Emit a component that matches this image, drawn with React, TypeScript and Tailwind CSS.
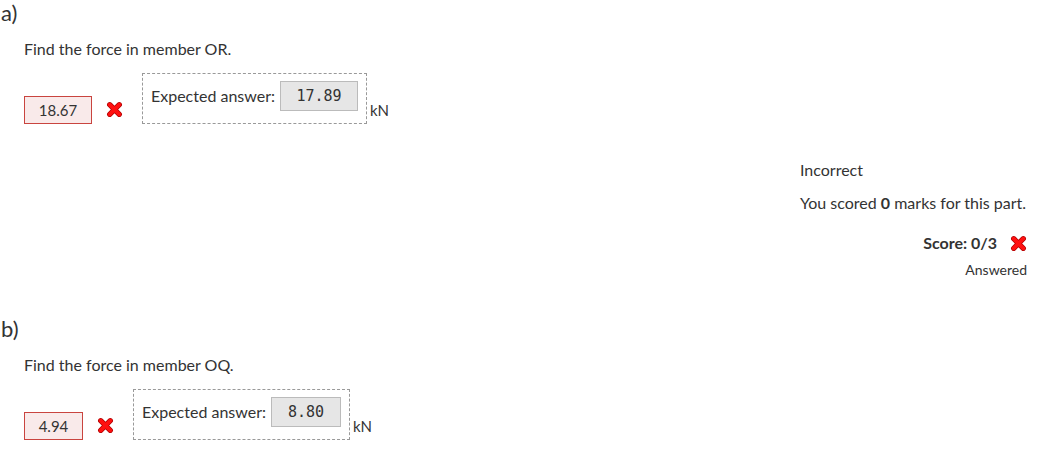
import React from "react";

const Cross = ({ className = "" }: { className?: string }) => (
  <svg viewBox="0 0 16 16" className={className} aria-hidden="true">
    <path
      d="M3.5 3.5 L12.5 12.5 M12.5 3.5 L3.5 12.5"
      stroke="#b00000"
      strokeWidth="5"
      strokeLinecap="round"
    />
    <path
      d="M3.5 3.5 L12.5 12.5 M12.5 3.5 L3.5 12.5"
      stroke="#ff1010"
      strokeWidth="3.6"
      strokeLinecap="round"
    />
  </svg>
);

function AnswerRow({
  given,
  expected,
  inputW,
  expW,
}: {
  given: string;
  expected: string;
  inputW: string;
  expW: string;
}) {
  return (
    <div className="flex items-end">
      <div
        className={`h-[28px] ${inputW} border border-[#c9443f] bg-[#f9eaea] flex items-center justify-center text-[15px] text-[#333]`}
      >
        {given}
      </div>
      <Cross className="w-[17px] h-[17px] ml-[14px] mr-[19px] mb-[6px]" />
      <div className="flex items-center border border-dashed border-[#999] pl-[8px] pr-[8px] pt-[7px] pb-[12px]">
        <span className="text-[16px] text-[#333] mr-[5px]">Expected answer:</span>
        <div
          className={`h-[30px] ${expW} bg-[#e6e6e6] border border-[#bbb] flex items-center justify-center text-[15px] text-[#333] font-['DejaVu_Sans_Mono',monospace]`}
        >
          {expected}
        </div>
      </div>
      <span className="ml-[3px] mb-[6px] text-[15px] text-[#333] leading-none">kN</span>
    </div>
  );
}

export default function App() {
  return (
    <div className="w-[1041px] h-[476px] bg-white overflow-hidden font-['Lato','Noto_Sans',sans-serif] text-[#333]">
      <div className="text-[22px] leading-[26px] pt-[0px] pl-[1px] text-[#333]">a)</div>
      <div className="pl-[24px] mt-[13px] text-[16px] leading-[20px]">
        Find the force in member OR.
      </div>
      <div className="pl-[24px] mt-[14px]">
        <AnswerRow given="18.67" expected="17.89" inputW="w-[68px]" expW="w-[78px]" />
      </div>
      <div className="flex justify-end pr-[14px] mt-[36px]">
        <div className="w-[227px] text-[16px]">
          <div className="leading-[20px]">Incorrect</div>
          <div className="leading-[20px] mt-[13px]">
            You scored <b>0</b> marks for this part.
          </div>
          <div className="flex justify-end items-center mt-[20px] leading-[20px]">
            <b>Score: 0/3</b>
            <Cross className="w-[17px] h-[17px] ml-[13px]" />
          </div>
          <div className="text-right text-[14px] leading-[18px] mt-[8px]">Answered</div>
        </div>
      </div>
      <div className="text-[22px] leading-[26px] mt-[37px] pl-[1px]">b)</div>
      <div className="pl-[24px] mt-[13px] text-[16px] leading-[20px]">
        Find the force in member OQ.
      </div>
      <div className="pl-[24px] mt-[14px]">
        <AnswerRow given="4.94" expected="8.80" inputW="w-[59px]" expW="w-[70px]" />
      </div>
    </div>
  );
}
